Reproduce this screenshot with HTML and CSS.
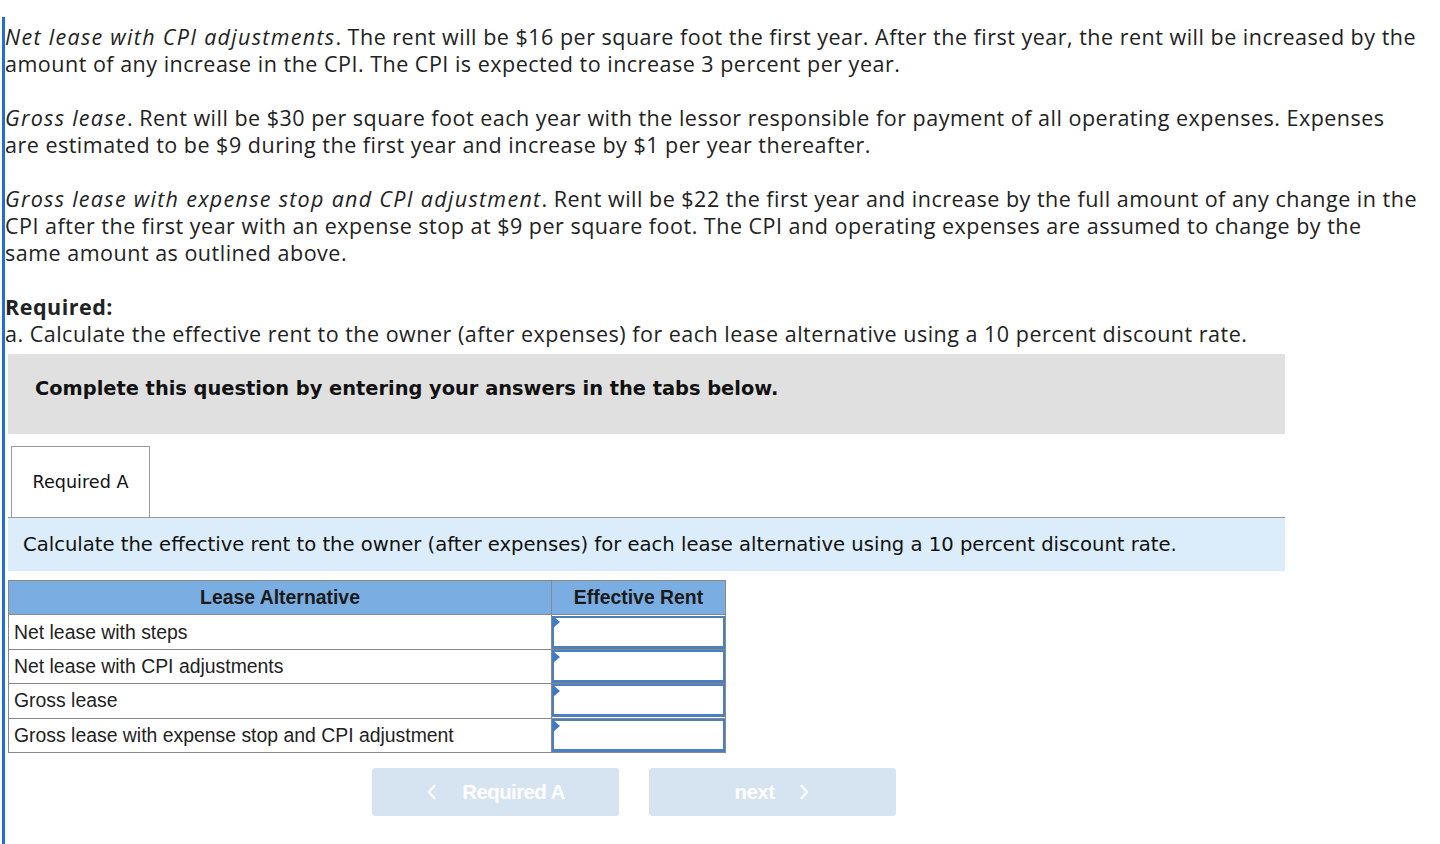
FILE: index.html
```html
<!DOCTYPE html>
<html lang="en">
<head>
    <meta charset="UTF-8">
    <title>Lease Alternatives</title>
    <link rel="stylesheet" href="styles.css">
</head>
<body>

    <div class="question">
        <p><em>Net lease with CPI adjustments</em>. The rent will be $16 per square foot the first year. After the first year, the rent will be increased by the amount of any increase in the CPI. The CPI is expected to increase 3 percent per year.</p>

        <p><em>Gross lease</em>. Rent will be $30 per square foot each year with the lessor responsible for payment of all operating expenses. Expenses are estimated to be $9 during the first year and increase by $1 per year thereafter.</p>

        <p><em>Gross lease with expense stop and CPI adjustment</em>. Rent will be $22 the first year and increase by the full amount of any change in the CPI after the first year with an expense stop at $9 per square foot. The CPI and operating expenses are assumed to change by the same amount as outlined above.</p>

        <p class="required"><strong>Required:</strong><br>a. Calculate the effective rent to the owner (after expenses) for each lease alternative using a 10 percent discount rate.</p>

        <div class="notice">Complete this question by entering your answers in the tabs below.</div>

        <div class="tabs">
            <div class="tab">Required A</div>
        </div>

        <div class="tab-prompt">Calculate the effective rent to the owner (after expenses) for each lease alternative using a 10 percent discount rate.</div>

        <table class="answer-table">
            <tr>
                <th class="col-name">Lease Alternative</th>
                <th class="col-value">Effective Rent</th>
            </tr>
            <tr>
                <td>Net lease with steps</td>
                <td class="cell-input"><input type="text"></td>
            </tr>
            <tr>
                <td>Net lease with CPI adjustments</td>
                <td class="cell-input"><input type="text"></td>
            </tr>
            <tr>
                <td>Gross lease</td>
                <td class="cell-input"><input type="text"></td>
            </tr>
            <tr>
                <td>Gross lease with expense stop and CPI adjustment</td>
                <td class="cell-input"><input type="text"></td>
            </tr>
        </table>

        <div class="nav">
            <button class="nav-btn">
                <svg class="chev" width="12" height="18" viewBox="0 0 12 18"><path d="M9 2 L3 9 L9 16" fill="none" stroke="#fff" stroke-width="2"/></svg>
                <span>Required A</span>
            </button>
            <button class="nav-btn">
                <span>next</span>
                <svg class="chev" width="12" height="18" viewBox="0 0 12 18"><path d="M3 2 L9 9 L3 16" fill="none" stroke="#fff" stroke-width="2"/></svg>
            </button>
        </div>
    </div>

</body>
</html>
```

FILE: styles.css
```css
body {
    margin: 0;
    padding: 0;
    background: #fff;
    color: #222;
    font-family: "Open Sans", Lato, sans-serif;
}

.question {
    margin: 17px 0 0 2px;
    padding: 6px 0 30px 0;
    border-left: 3px solid #1f6fd6;
    min-height: 800px;
    font-size: 21.5px;
    line-height: 27px;
    letter-spacing: 0.5px;
}

.question p {
    margin: 0 0 27px 0;
    padding-right: 21px;
}

.question em {
    letter-spacing: 1.3px;
}

.question p.required {
    margin-bottom: 7px;
}

.notice {
    background: #e0e0e0;
    margin-left: 3px;
    width: 1277px;
    height: 80px;
    padding-left: 27px;
    display: flex;
    align-items: center;
    padding-bottom: 12px;
    box-sizing: border-box;
    font-family: "DejaVu Sans", Verdana, sans-serif;
    font-weight: bold;
    font-size: 19.4px;
    letter-spacing: 0;
    color: #111;
}

.tabs {
    margin: 12px 0 0 6px;
    display: flex;
}

.tab {
    width: 139px;
    height: 71px;
    border: 1px solid #999;
    border-bottom: none;
    box-sizing: border-box;
    display: flex;
    align-items: center;
    justify-content: center;
    font-family: "DejaVu Sans", Verdana, sans-serif;
    font-size: 17.6px;
    letter-spacing: 0;
    color: #111;
}

.tab-prompt {
    margin-left: 3px;
    width: 1277px;
    height: 54px;
    box-sizing: border-box;
    border-top: 1px solid #999;
    background: #dbecfa;
    padding-left: 15px;
    display: flex;
    align-items: center;
    font-family: "DejaVu Sans", Verdana, sans-serif;
    font-size: 19.6px;
    letter-spacing: 0;
    color: #111;
}

.answer-table {
    margin: 9px 0 0 3px;
    border-collapse: collapse;
    font-family: "Liberation Sans", Arial, sans-serif;
    font-size: 19.4px;
    letter-spacing: 0;
    color: #222;
}

.answer-table th,
.answer-table td {
    border: 1px solid #888;
    height: 33.4px;
    padding: 0;
}

.answer-table th {
    background: #7aade1;
    font-weight: bold;
    color: #1a1a1a;
}

.answer-table td {
    padding-left: 5px;
}

.col-name {
    width: 542px;
}

.col-value {
    width: 173px;
}

.answer-table td.cell-input {
    padding: 0;
    position: relative;
}

.cell-input input {
    display: block;
    width: 100%;
    height: 33px;
    box-sizing: border-box;
    border: 2px solid #4a7fc0;
    border-bottom-width: 3px;
    margin: 0;
    outline: none;
}

.cell-input::before {
    content: "";
    position: absolute;
    left: 1px;
    top: 1px;
    border-top: 6px solid transparent;
    border-bottom: 6px solid transparent;
    border-left: 7px solid #3c7bc4;
}

.nav {
    display: flex;
    gap: 30px;
    margin: 15px 0 0 367px;
}

.nav-btn {
    width: 247px;
    height: 48px;
    border: none;
    border-radius: 3px;
    background: #d6e3f1;
    color: #fff;
    font-family: "Liberation Sans", Arial, sans-serif;
    font-weight: bold;
    font-size: 20.5px;
    letter-spacing: -0.6px;
    display: flex;
    align-items: center;
    justify-content: center;
    gap: 24px;
}

.chev {
    display: block;
}
```
